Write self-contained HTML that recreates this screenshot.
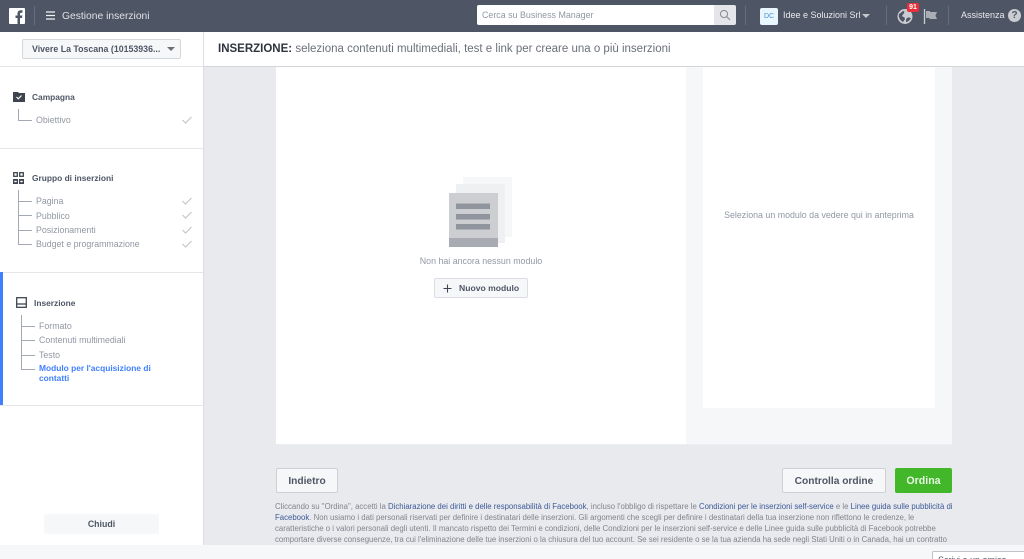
<!DOCTYPE html>
<html lang="it"><head><meta charset="utf-8"><title>Gestione inserzioni</title>
<style>
html,body{margin:0;padding:0;width:1024px;height:559px;overflow:hidden;background:#e9eaed}
body{font-family:"Liberation Sans",sans-serif;position:relative;color:#4e5665;filter:blur(.35px)}
.a{position:absolute;white-space:nowrap}
.s{font-size:8.8px;color:#9197a3}
.h{font-size:8.4px;font-weight:bold;color:#4e5665}
.ln{position:absolute;background:#a4a8b0}
.chk{position:absolute;width:10px;height:8px}
.l{font-size:7.8px;color:#80848c;line-height:10.8px;left:275px;width:700px}
.l b{font-weight:normal;color:#3b5998}
</style></head><body>

<!-- header -->
<div class="a" style="left:0;top:0;width:1024px;height:32px;background:#4e5665"></div>
<div class="a" style="left:9px;top:8px;width:16px;height:16px;background:#fff;border-radius:1px"></div>
<svg class="a" style="left:9px;top:8px" width="16" height="16"><path d="M11 16V10h2l.4-2.5H11V6c0-.8.3-1.3 1.3-1.3h1.2V2.400C13.200 2.300 12.500 2.300 11.700 2.300 9.900 2.300 8.500 3.400 8.500 5.500v2H6.500V10h2v6z" fill="#4e5665"/></svg>
<div class="a" style="left:34px;top:6px;width:1px;height:19px;background:#666e7c"></div>
<svg class="a" style="left:46px;top:11px" width="10" height="10"><path d="M0 1h9M0 4.500h9M0 8h9" stroke="#f0f1f3" stroke-width="1.200"/></svg>
<div class="a" style="left:62px;top:11px;font-size:10.3px;color:#dfe1e5">Gestione inserzioni</div>

<div class="a" style="left:477px;top:5px;width:237px;height:20px;background:#fff;border-radius:2px 0 0 2px"></div>
<div class="a" style="left:482px;top:10px;font-size:8.9px;color:#9197a3">Cerca su Business Manager</div>
<div class="a" style="left:714px;top:5px;width:22px;height:20px;background:#e5e6e9;border-radius:0 2px 2px 0"></div>
<svg class="a" style="left:719px;top:9px" width="12" height="12"><circle cx="5" cy="5" r="3.600" fill="none" stroke="#8b9099" stroke-width="1.100"/><path d="M7.600 7.600L11 11" stroke="#8b9099" stroke-width="1.200"/></svg>
<div class="a" style="left:745px;top:6px;width:1px;height:19px;background:#666e7c"></div>
<div class="a" style="left:760px;top:8px;width:18px;height:17px;background:#e8f6fd;border-radius:2px;font-size:7px;line-height:17px;text-align:center;color:#4a90d9">DC</div>
<div class="a" style="left:783px;top:10px;font-size:9px;color:#e9eaed">Idee e Soluzioni Srl</div>
<div class="a" style="left:862px;top:14px;width:0;height:0;border-left:4px solid transparent;border-right:4px solid transparent;border-top:4px solid #c4c7cc"></div>
<div class="a" style="left:886px;top:6px;width:1px;height:19px;background:#666e7c"></div>
<svg class="a" style="left:897px;top:8px" width="17" height="17"><circle cx="8" cy="8.500" r="7.500" fill="#c9ccd1"/><path d="M2 6c2-1 3-3 5-3 1 2-1 3-2 5 1 1 3 1 3 3l-2 3C4 13 1 10 2 6zM10 10c2-1 3 0 4 0-1 2-3 4-5 4 0-2 0-3 1-4z" fill="#4e5665"/></svg>
<div class="a" style="left:907px;top:3px;width:12px;height:9px;background:#e8303a;border-radius:2px;font-size:7px;font-weight:bold;line-height:9px;text-align:center;color:#fff">91</div>
<svg class="a" style="left:923px;top:9px" width="15" height="15"><path d="M1.500 0v15" stroke="#c9ccd1" stroke-width="1.300"/><path d="M3 2h4v1h7l-1.500 3.500L14 10H6.500V9H3z" fill="#a9adb4"/></svg>
<div class="a" style="left:948px;top:6px;width:1px;height:19px;background:#666e7c"></div>
<div class="a" style="left:961px;top:10px;font-size:9px;color:#e9eaed">Assistenza</div>
<div class="a" style="left:1008px;top:9px;width:13px;height:13px;border-radius:50%;background:#c9ccd1;font-size:10px;font-weight:bold;line-height:13px;text-align:center;color:#4e5665">?</div>

<!-- title bar -->
<div class="a" style="left:204px;top:32px;width:820px;height:34px;background:#fff;border-bottom:1px solid #d3d5d9"></div>
<div class="a" style="left:218px;top:43px;font-size:11.5px;color:#6b7079"><span style="font-weight:bold;color:#2f343d">INSERZIONE:</span> seleziona contenuti multimediali, test e link per creare una o più inserzioni</div>

<!-- sidebar -->
<div class="a" style="left:0;top:32px;width:203px;height:513px;background:#fff;border-right:1px solid #dcdee3"></div>
<div class="a" style="left:22px;top:39px;width:157px;height:18px;background:#f6f7f8;border:1px solid #d3d6db;border-radius:2px"></div>
<div class="a" style="left:32px;top:44px;font-size:8.8px;font-weight:bold;color:#4e5665">Vivere La Toscana (10153936...</div>
<div class="a" style="left:167px;top:47px;width:0;height:0;border-left:4px solid transparent;border-right:4px solid transparent;border-top:4px solid #6a7079"></div>
<div class="a" style="left:0;top:66px;width:203px;height:1px;background:#e5e6e9"></div>

<svg class="a" style="left:13px;top:91px" width="12" height="11"><path d="M0 1h5l1 1h6v9H0z" fill="#3f4550"/><path d="M3.500 6l1.800 1.800L8.500 4.500" fill="none" stroke="#fff" stroke-width="1.100"/></svg>
<div class="a h" style="left:32px;top:92px">Campagna</div>
<div class="ln" style="left:18px;top:109px;width:1px;height:12px"></div>
<div class="ln" style="left:18px;top:120px;width:14px;height:1px"></div>
<div class="a s" style="left:36px;top:115px">Obiettivo</div>
<svg class="chk" style="left:182px;top:116px"><path d="M.500 4l3 3L9.500 1" fill="none" stroke="#c4c7cc" stroke-width="1.200"/></svg>
<div class="a" style="left:0;top:148px;width:203px;height:1px;background:#e5e6e9"></div>

<svg class="a" style="left:13px;top:172px" width="11" height="12"><g fill="none" stroke="#3f4550" stroke-width="1.300"><rect x=".7" y=".7" width="3.600" height="3.600"/><rect x="6.700" y=".7" width="3.600" height="3.600"/></g><rect x="0" y="7" width="5" height="5" fill="#3f4550"/><rect x="6" y="7" width="5" height="5" fill="#3f4550"/><rect x="1.300" y="8.800" width="2.400" height="1.400" fill="#fff"/><rect x="7.300" y="8.800" width="2.400" height="1.400" fill="#fff"/></svg>
<div class="a h" style="left:32px;top:173px">Gruppo di inserzioni</div>
<div class="ln" style="left:18px;top:190px;width:1px;height:55px"></div>
<div class="ln" style="left:18px;top:201px;width:14px;height:1px"></div>
<div class="ln" style="left:18px;top:215px;width:14px;height:1px"></div>
<div class="ln" style="left:18px;top:230px;width:14px;height:1px"></div>
<div class="ln" style="left:18px;top:244px;width:14px;height:1px"></div>
<div class="a s" style="left:36px;top:196px">Pagina</div>
<div class="a s" style="left:36px;top:211px">Pubblico</div>
<div class="a s" style="left:36px;top:225px">Posizionamenti</div>
<div class="a s" style="left:36px;top:239px">Budget e programmazione</div>
<svg class="chk" style="left:182px;top:197px"><path d="M.500 4l3 3L9.500 1" fill="none" stroke="#c4c7cc" stroke-width="1.200"/></svg>
<svg class="chk" style="left:182px;top:211px"><path d="M.500 4l3 3L9.500 1" fill="none" stroke="#c4c7cc" stroke-width="1.200"/></svg>
<svg class="chk" style="left:182px;top:226px"><path d="M.500 4l3 3L9.500 1" fill="none" stroke="#c4c7cc" stroke-width="1.200"/></svg>
<svg class="chk" style="left:182px;top:240px"><path d="M.500 4l3 3L9.500 1" fill="none" stroke="#c4c7cc" stroke-width="1.200"/></svg>
<div class="a" style="left:0;top:272px;width:203px;height:1px;background:#e5e6e9"></div>

<div class="a" style="left:0;top:272px;width:3px;height:134px;background:#4080ff"></div>
<svg class="a" style="left:16px;top:297px" width="11" height="11"><rect x=".7" y=".7" width="9.600" height="9.600" fill="none" stroke="#3f4550" stroke-width="1.300"/><path d="M1 7h9" stroke="#3f4550" stroke-width="1.300"/></svg>
<div class="a h" style="left:34px;top:298px">Inserzione</div>
<div class="ln" style="left:21px;top:315px;width:1px;height:54px"></div>
<div class="ln" style="left:21px;top:326px;width:14px;height:1px"></div>
<div class="ln" style="left:21px;top:340px;width:14px;height:1px"></div>
<div class="ln" style="left:21px;top:355px;width:14px;height:1px"></div>
<div class="ln" style="left:21px;top:369px;width:14px;height:1px"></div>
<div class="a s" style="left:39px;top:321px">Formato</div>
<div class="a s" style="left:39px;top:335px">Contenuti multimediali</div>
<div class="a s" style="left:39px;top:350px">Testo</div>
<div class="a" style="left:39px;top:364px;font-size:8.4px;font-weight:bold;line-height:9.5px;color:#4080ff">Modulo per l'acquisizione di<br>contatti</div>
<div class="a" style="left:0;top:405px;width:203px;height:1px;background:#e5e6e9"></div>

<div class="a" style="left:44px;top:514px;width:115px;height:20px;background:#f6f7f8;border-radius:2px;font-size:8.8px;font-weight:bold;line-height:21px;text-align:center;color:#4e5665">Chiudi</div>

<!-- main panel -->
<div class="a" style="left:276px;top:67px;width:676px;height:377px;background:#f6f7f9;border-bottom:1px solid #eceef0"></div>
<div class="a" style="left:276px;top:67px;width:410px;height:377px;background:#fff"></div>
<div class="a" style="left:703px;top:67px;width:232px;height:341px;background:#fff"></div>
<div class="a" style="left:703px;top:210px;width:232px;text-align:center;font-size:8.85px;color:#9197a3">Seleziona un modulo da vedere qui in anteprima</div>

<svg class="a" style="left:449px;top:177px" width="64" height="70">
<rect x="14" y="0" width="49" height="60" fill="#f6f7f8"/>
<rect x="7" y="7" width="49" height="59" fill="#eef0f2"/>
<rect x="0" y="16" width="49" height="54" fill="#cdced2"/>
<rect x="0" y="61" width="49" height="9" fill="#a9abb2"/>
<rect x="7" y="26.500" width="34" height="5.500" fill="#90949c"/>
<rect x="7" y="37" width="34" height="5.500" fill="#90949c"/>
<rect x="7" y="47" width="34" height="5.500" fill="#90949c"/>
</svg>
<div class="a" style="left:276px;top:256px;width:410px;text-align:center;font-size:8.85px;color:#9197a3">Non hai ancora nessun modulo</div>
<div class="a" style="left:434px;top:278px;width:92px;height:18px;background:#f6f7f8;border:1px solid #dcdee3;border-radius:2px"></div>
<svg class="a" style="left:443px;top:284px" width="9" height="9"><path d="M4.500 .5v8M.5 4.500h8" stroke="#3f4550" stroke-width="1.100"/></svg>
<div class="a" style="left:459px;top:283px;font-size:8.6px;font-weight:bold;color:#4e5665">Nuovo modulo</div>

<!-- buttons -->
<div class="a" style="left:276px;top:468px;width:60px;height:23px;background:#f6f7f8;border:1px solid #ced0d4;border-radius:2px;font-size:10.2px;font-weight:bold;line-height:25px;text-align:center;color:#4e5665">Indietro</div>
<div class="a" style="left:782px;top:468px;width:102px;height:23px;background:#f6f7f8;border:1px solid #ced0d4;border-radius:2px;font-size:10.2px;font-weight:bold;line-height:25px;text-align:center;color:#4e5665">Controlla ordine</div>
<div class="a" style="left:895px;top:468px;width:57px;height:25px;background:#42b72a;border-radius:2px;font-size:10.6px;font-weight:bold;line-height:26px;text-align:center;color:#e8f7e4">Ordina</div>

<!-- legal -->
<div class="a l" style="top:502px">Cliccando su "Ordina", accetti la <b>Dichiarazione dei diritti e delle responsabilità di Facebook</b>, incluso l'obbligo di rispettare le <b>Condizioni per le inserzioni self-service</b> e le <b>Linee guida sulle pubblicità di</b></div>
<div class="a l" style="top:513px"><b>Facebook</b>. Non usiamo i dati personali riservati per definire i destinatari delle inserzioni. Gli argomenti che scegli per definire i destinatari della tua inserzione non riflettono le credenze, le</div>
<div class="a l" style="top:524px">caratteristiche o i valori personali degli utenti. Il mancato rispetto dei Termini e condizioni, delle Condizioni per le inserzioni self-service e delle Linee guida sulle pubblicità di Facebook potrebbe</div>
<div class="a l" style="top:535px">comportare diverse conseguenze, tra cui l'eliminazione delle tue inserzioni o la chiusura del tuo account. Se sei residente o se la tua azienda ha sede negli Stati Uniti o in Canada, hai un contratto</div>

<!-- bottom band -->
<div class="a" style="left:0;top:545px;width:1024px;height:14px;background:#f6f7f9"></div>
<div class="a" style="left:932px;top:551px;width:92px;height:8px;background:#fff;border:1px solid #bfc2c7;border-right:0;border-bottom:0;border-radius:2px 0 0 0;overflow:hidden;font-size:9px;line-height:16px;color:#4e5665;box-sizing:border-box;padding-left:5px">Scrivi a un amico</div>
</body></html>
